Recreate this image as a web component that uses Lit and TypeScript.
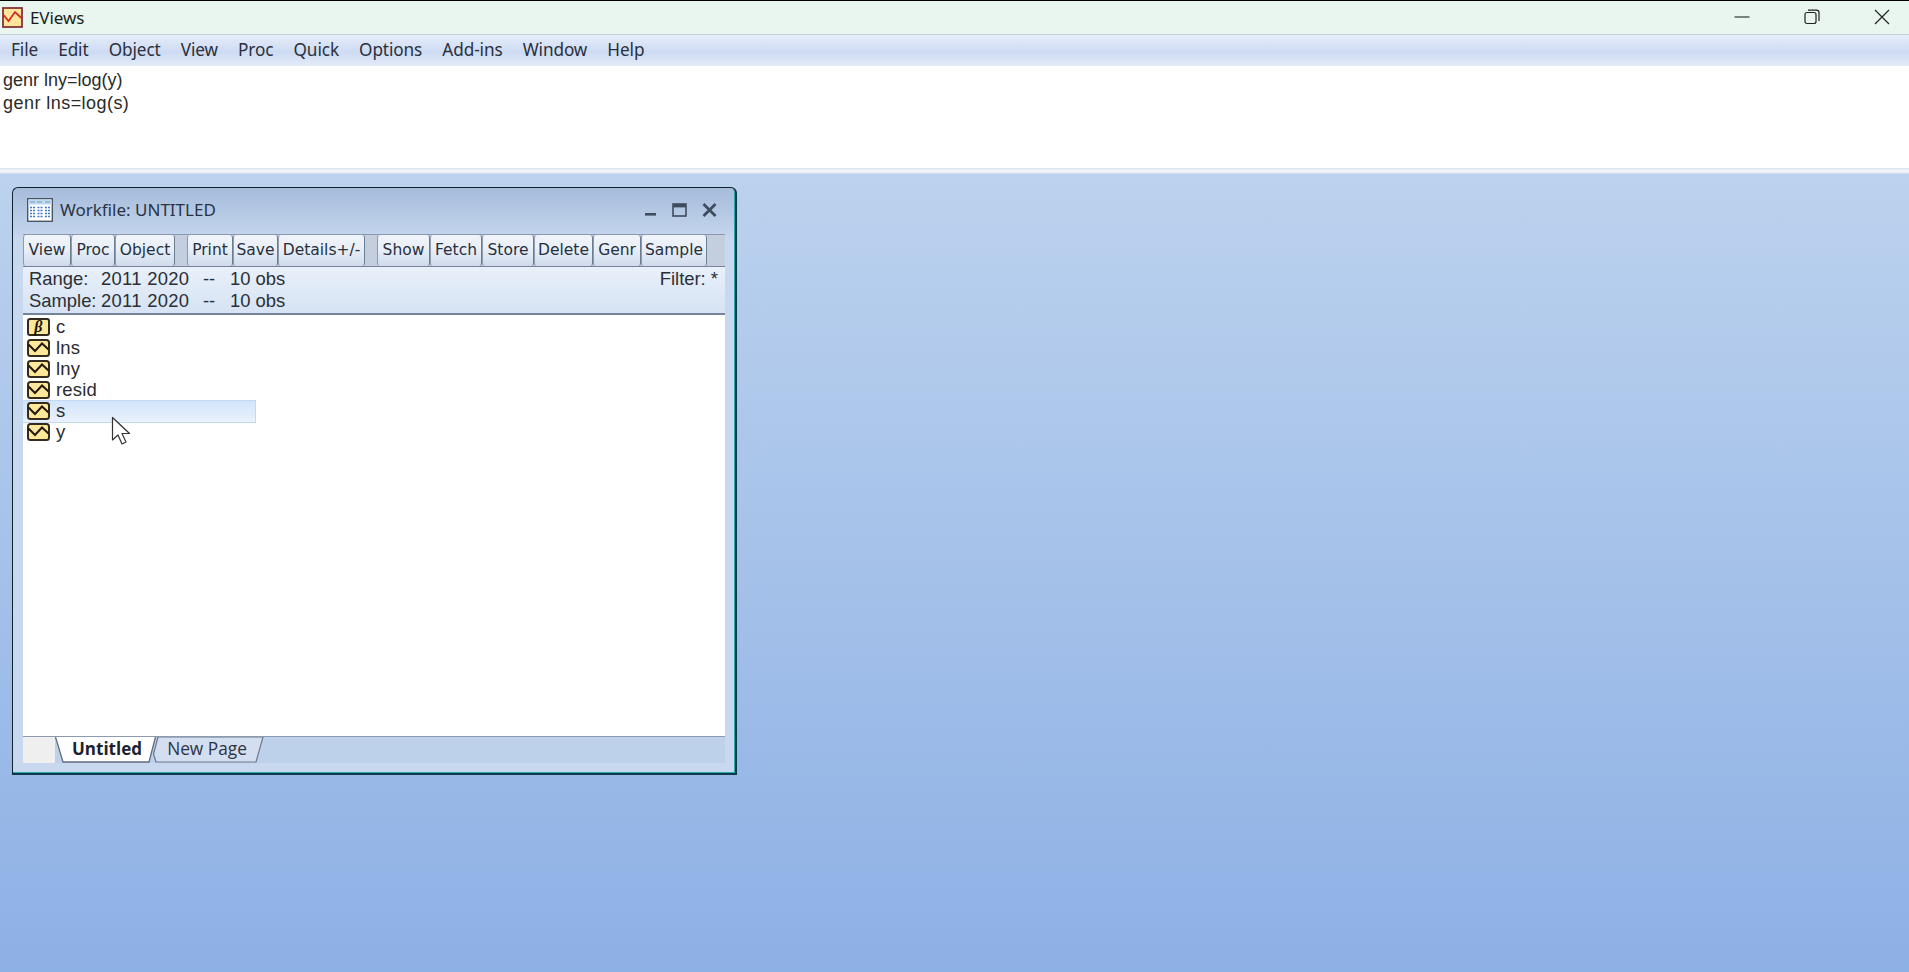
import { LitElement, html, css, svg } from "lit";
import { customElement } from "lit/decorators.js";

const MENUS = ["File", "Edit", "Object", "View", "Proc", "Quick", "Options", "Add-ins", "Window", "Help"];
const GROUPS: [string, number][][] = [
  [["View", 48], ["Proc", 44], ["Object", 60]],
  [["Print", 46], ["Save", 45], ["Details+/-", 87]],
  [["Show", 53], ["Fetch", 52], ["Store", 52], ["Delete", 59], ["Genr", 48], ["Sample", 66]],
];
const ITEMS = ["c", "lns", "lny", "resid", "s", "y"];

const seriesIcon = svg`<svg class="ico" viewBox="0 0 23 18" width="23" height="18">
  <rect x="1" y="1" width="21" height="16" rx="2.5" fill="#ffe899" stroke="#332c1e" stroke-width="2"/>
  <path d="M1.5 5.5 L8 12 L15 4.5 L21.5 10.5" fill="none" stroke="#241a10" stroke-width="2"/>
</svg>`;

@customElement("app-root")
export class AppRoot extends LitElement {
  static styles = css`
    :host { display: flex; flex-direction: column; height: 972px; overflow: hidden; font-family: "Liberation Sans", Arial, sans-serif; color: #222; }
    .titlebar { height: 35px; flex: none; box-sizing: border-box; border-top: 1px solid #000; border-bottom: 1px solid #c6cfd2; background: #e8f6ef; display: flex; align-items: center; }
    .app-ico { margin-left: 2px; flex: none; }
    .app-name { margin-left: 7px; font: 17px "Noto Sans", sans-serif; color: #1c1c1c; letter-spacing: -0.1px; flex: 1; }
    .win-btns { display: flex; gap: 16px; align-self: flex-start; }
    .win-btn { width: 54px; height: 31px; display: flex; align-items: center; justify-content: center; }
    .win-btns svg { display: block; }
    .menubar { height: 31px; flex: none; display: flex; align-items: center; padding: 0 0 3px 11px; gap: 20.1px; box-sizing: border-box;
      background: linear-gradient(#e6edf9, #cddbf3 55%, #e3ebf8); font: 17.2px "Noto Sans", sans-serif; color: #2a303c; letter-spacing: -0.1px; }
    .cmd { height: 102px; flex: none; box-sizing: border-box; background: #fff; padding: 3px 3px; font-size: 18px; line-height: 23px; color: #2a2a2a; }
    .cmd div { white-space: pre; }
    .cmd .l2 { letter-spacing: 0.45px; }
    .sep { height: 6px; flex: none; background: linear-gradient(#d5dde6, #eff3f9 30%, #f1f5fa 70%, #c4d4e9); }
    .desktop { flex: 1; background: linear-gradient(#bcd2ee, #8db0e5); padding: 13px 0 0 12px; position: relative; }
    .window { width: 725px; height: 588px; box-sizing: border-box; display: flex; flex-direction: column; position: relative;
      border: 1px solid #10222c; border-right-width: 2px; border-bottom-width: 2px; border-right-color: #0e3a4a; border-bottom-color: #0e3a4a; border-radius: 6px 6px 0 0;
      background: linear-gradient(#a5bcdb, #c7d8ef 9%, #c7d8ef); padding: 0 10px 10px 10px;
      box-shadow: inset -1px -1px 0 #2aa7a8; }
    .w-title { height: 46px; flex: none; display: flex; align-items: center; padding-bottom: 3px; box-sizing: border-box; }
    .w-ico { margin-left: 4px; flex: none; }
    .w-name { margin-left: 7px; font: 17px "Noto Sans", sans-serif; color: #2a3344; flex: 1; }
    .w-ctl { display: flex; align-items: center; gap: 15px; margin-right: 8px; }
    .toolbar { height: 33px; flex: none; box-sizing: border-box; display: flex; background: #c3cfde; border-top: 1px solid #8a99ad; border-bottom: 1px solid #75859b; }
    .group { display: flex; margin-right: 12px; }
    .btn { box-sizing: border-box; text-align: center; font: 15.5px/30px "DejaVu Sans", sans-serif; color: #26303e; white-space: nowrap;
      background: linear-gradient(#f0f4fa, #e9eff8 45%, #cfdbec); border-right: 1px solid #6e7e92; border-left: 1px solid #8d9bad; border-radius: 3px; }
    .info { height: 48px; flex: none; box-sizing: border-box; background: linear-gradient(#e9f0fa, #d6e3f4); border-bottom: 2px solid #74849a; padding: 2px 7px 0 6px; font-size: 18.4px; line-height: 20px; color: #2b2f36; display: grid; grid-template-columns: 72px 102px 27px 1fr auto; white-space: pre; }
    .info .d { letter-spacing: 0.3px; }
    .list { flex: 1; background: #fff; padding-top: 2px; position: relative; }
    .row { height: 21px; box-sizing: border-box; display: flex; align-items: center; gap: 6px; padding: 0 0 2px 4px; width: 232px; font-size: 18.5px; letter-spacing: 0.2px; color: #2c2c30; }
    .row.sel { background: linear-gradient(#d3e5fb, #e9f1fc); box-shadow: 0 0 0 1px #c3d8f2; }
    .ico { flex: none; display: block; }
    .beta { flex: none; width: 23px; height: 18px; box-sizing: border-box; border: 2px solid #332c1e; border-radius: 3px; background: #ffe899; color: #1a1408; font: italic bold 16px/14px "Liberation Serif", serif; text-align: center; }
    .cursor { position: absolute; left: 88px; top: 101px; }
    .tabs { height: 27px; flex: none; box-sizing: border-box; display: flex; background: #bdd1ea; border-top: 1px solid #8c9ab0; }
    .corner { width: 32px; background: #efefef; flex: none; }
    .tab { position: relative; display: flex; align-items: center; justify-content: center; height: 26px; flex: none; box-sizing: border-box; padding-bottom: 3px; }
    .tab svg { position: absolute; left: 0; top: 0; }
    .tab span { position: relative; }
    .tab.on { width: 101px; font: bold 17px "Open Sans", sans-serif; color: #1b2330; margin-right: -3px; z-index: 1; padding-left: 3px; }
    .tab.off { width: 111px; font: 17.3px "Open Sans", sans-serif; color: #2c3444; padding-right: 3px; }
  `;

  render() {
    return html`
      <div class="titlebar">
        <svg class="app-ico" width="21" height="21" viewBox="0 0 21 21">
          <rect x="1" y="1" width="19" height="19" fill="#fde69a" stroke="#84343a" stroke-width="1.8"/>
          <path d="M1.5 8 L6.5 14 L13 5 L20 11.5" fill="none" stroke="#d42a2a" stroke-width="1.8"/>
        </svg>
        <span class="app-name">EViews</span>
        <div class="win-btns">
          <div class="win-btn"><svg width="16" height="16" viewBox="0 0 16 16"><path d="M0.5 8H15.5" stroke="#222" stroke-width="1.1"/></svg></div>
          <div class="win-btn"><svg width="16" height="16" viewBox="0 0 16 16"><rect x="1" y="3.5" width="11" height="11" rx="2" fill="none" stroke="#222" stroke-width="1.2"/><path d="M4 1.2H12.5Q15 1.2 15 3.7V12" fill="none" stroke="#222" stroke-width="1.2"/></svg></div>
          <div class="win-btn"><svg width="16" height="16" viewBox="0 0 16 16"><path d="M1 1L15 15M15 1L1 15" stroke="#222" stroke-width="1.2"/></svg></div>
        </div>
      </div>
      <div class="menubar">${MENUS.map((m) => html`<span>${m}</span>`)}</div>
      <div class="cmd"><div>genr lny=log(y)</div><div class="l2">genr lns=log(s)</div></div>
      <div class="sep"></div>
      <div class="desktop">
        <div class="window">
          <div class="w-title">
            <svg class="w-ico" width="26" height="24" viewBox="0 0 26 24">
              <rect x="0.7" y="0.7" width="24.6" height="22.6" fill="#fff" stroke="#4b5563" stroke-width="1.4"/>
              <rect x="1.5" y="1.5" width="23" height="5" fill="#bcd9f0"/>
              <path d="M3 4h5M10 4h5M18 4h5" stroke="#7d99b4" stroke-width="1"/>
              <path d="M3 9.5h5M3 12.5h5M3 15.5h5M3 18.5h5M10.5 9.5h5M10.5 12.5h5M10.5 15.5h5M10.5 18.5h5M18 9.5h5M18 12.5h5M18 15.5h5M18 18.5h5" stroke="#3f79d6" stroke-width="1.3" stroke-dasharray="2 1"/>
            </svg>
            <span class="w-name">Workfile: UNTITLED</span>
            <div class="w-ctl">
              <svg width="13" height="16" viewBox="0 0 13 16"><rect x="1" y="11" width="11" height="2.6" fill="#3f4c60"/></svg>
              <svg width="15" height="14" viewBox="0 0 15 14"><rect x="1" y="1" width="13" height="12" fill="none" stroke="#3f4c60" stroke-width="1.6"/><rect x="1" y="1" width="13" height="3.4" fill="#3f4c60"/></svg>
              <svg width="15" height="14" viewBox="0 0 15 14"><path d="M1.5 1L13.5 13M13.5 1L1.5 13" stroke="#3f4c60" stroke-width="2.8"/></svg>
            </div>
          </div>
          <div class="toolbar">
            ${GROUPS.map((g) => html`<div class="group">${g.map(([t, w]) => html`<div class="btn" style="width:${w}px">${t}</div>`)}</div>`)}
          </div>
          <div class="info">
            <span>Range:</span><span class="d">2011 2020</span><span>--</span><span>10 obs</span><span>Filter: *</span>
            <span>Sample:</span><span class="d">2011 2020</span><span>--</span><span>10 obs</span><span></span>
          </div>
          <div class="list">
            ${ITEMS.map((n) => html`<div class="row ${n === "s" ? "sel" : ""}">${n === "c" ? html`<div class="beta">β</div>` : seriesIcon}<span>${n}</span></div>`)}
            <svg class="cursor" width="20" height="30" viewBox="0 0 20 30">
              <path d="M1.5 1.5V24L7 19L11 28L15 26L11 17.5H18.5Z" fill="#fff" stroke="#333" stroke-width="1.2" stroke-linejoin="round"/>
            </svg>
          </div>
          <div class="tabs">
            <div class="corner"></div>
            <div class="tab on">
              <svg width="101" height="26" viewBox="0 0 101 26"><path d="M0.5 0L8 25H94L100.5 0" fill="#fff" stroke="#5f6c80" stroke-width="1.3"/></svg>
              <span>Untitled</span>
            </div>
            <div class="tab off">
              <svg width="111" height="26" viewBox="0 0 111 26"><path d="M3 25L0.5 17L5 0H110L103 25Z" fill="#d3dff0" stroke="#6c798c" stroke-width="1.2"/></svg>
              <span>New Page</span>
            </div>
          </div>
        </div>
      </div>
    `;
  }
}
